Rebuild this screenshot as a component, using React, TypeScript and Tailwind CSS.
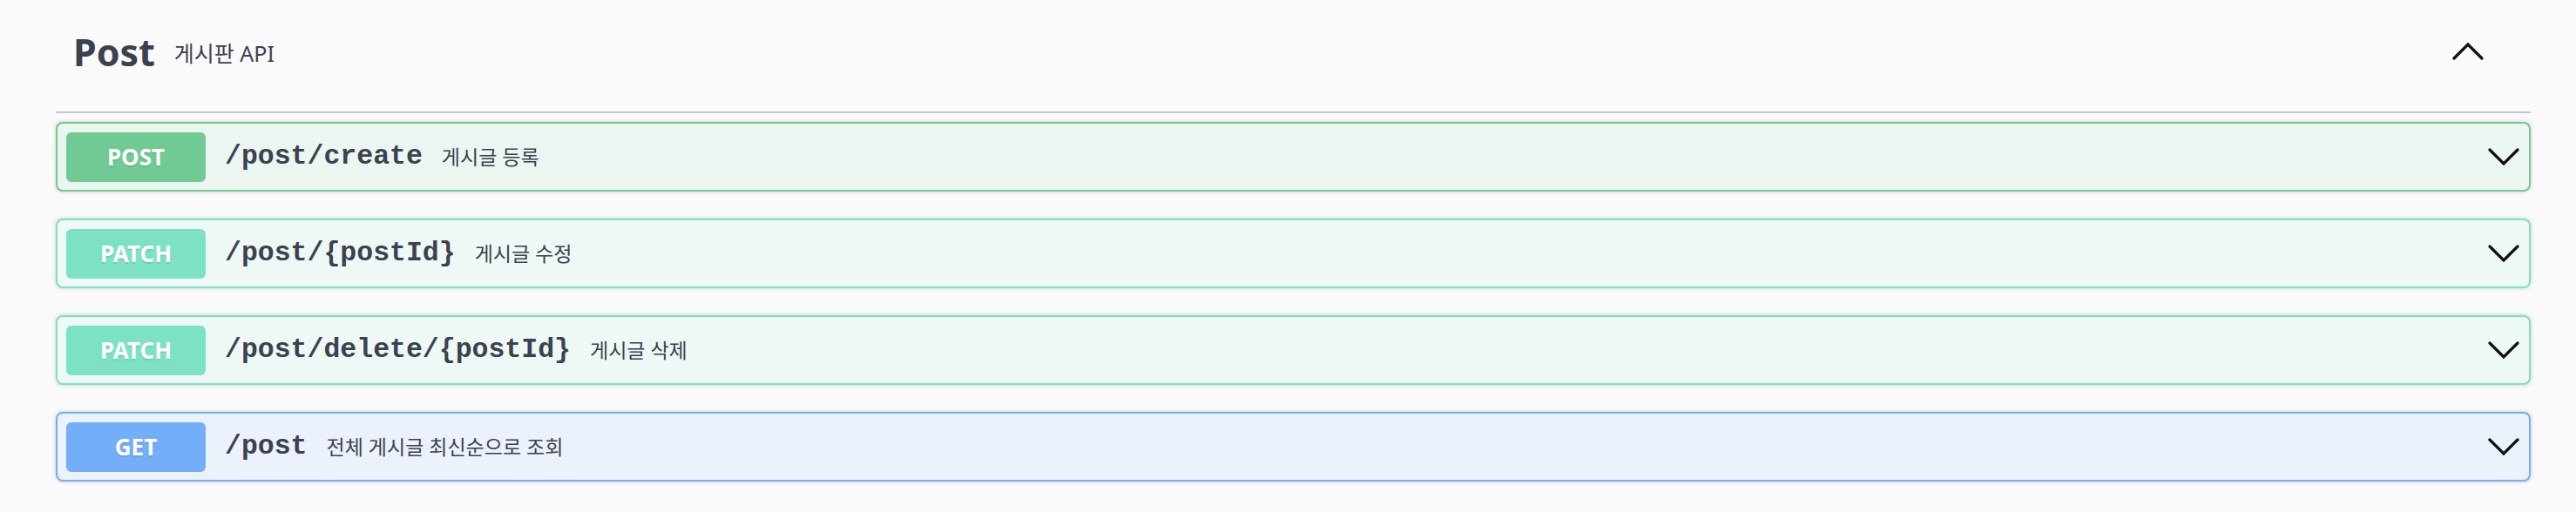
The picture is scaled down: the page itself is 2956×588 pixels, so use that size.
const ops = [
  {
    method: "POST",
    path: "/post/create",
    summary: "게시글 등록",
    card: "bg-[#ecf6f0] border-[#71c994]",
    badge: "bg-[#71c994]",
  },
  {
    method: "PATCH",
    path: "/post/{postId}",
    summary: "게시글 수정",
    card: "bg-[#eef8f4] border-[#7de2c3]",
    badge: "bg-[#7de2c3]",
  },
  {
    method: "PATCH",
    path: "/post/delete/{postId}",
    summary: "게시글 삭제",
    card: "bg-[#eef8f4] border-[#7de2c3]",
    badge: "bg-[#7de2c3]",
  },
  {
    method: "GET",
    path: "/post",
    summary: "전체 게시글 최신순으로 조회",
    card: "bg-[#ebf2fb] border-[#74adf8]",
    badge: "bg-[#74adf8]",
  },
];

const sans = "font-['Noto_Sans','Noto_Sans_CJK_KR',sans-serif]";

const Chevron = ({ up }: { up?: boolean }) => (
  <svg width="38" height="22" viewBox="0 0 38 22" className="shrink-0">
    <polyline
      points={up ? "3,19 19,3 35,19" : "3,3 19,19 35,3"}
      fill="none"
      stroke="#111"
      strokeWidth="3.3"
      strokeLinecap="round"
      strokeLinejoin="miter"
    />
  </svg>
);

const App = () => {
  return (
    <div className={`min-h-screen w-full bg-[#fafafa] pl-[64px] pr-[52px] ${sans}`}>
      {/* 태그 헤더 */}
      <div className="flex items-center justify-between h-[130px] pb-[10px] border-b-2 border-[#c4c6cc] pl-[20px] pr-[53px]">
        <div className="flex items-center">
          <span className="text-[43px] font-bold text-[#3b4151] leading-none">Post</span>
          <span className="ml-[22px] mt-[4px] text-[25px] text-[#3b4151] leading-none">
            게시판 API
          </span>
        </div>
        <Chevron up />
      </div>

      {/* 엔드포인트 목록 */}
      <div className="mt-[10px] flex flex-col gap-[31px]">
        {ops.map((op) => (
          <div
            key={op.path}
            className={`flex items-center h-[80px] border-2 rounded-[8px] px-[10px] shadow-[0_0_5px_rgba(0,0,0,0.19)] ${op.card}`}
          >
            <div
              className={`w-[160px] h-[57px] shrink-0 rounded-[6px] flex items-center justify-center text-white font-bold text-[26px] [text-shadow:0_2px_0_rgba(0,0,0,0.1)] ${op.badge}`}
            >
              {op.method}
            </div>
            <span className="ml-[22px] font-['Liberation_Mono',monospace] font-bold text-[31.5px] text-[#3b4151] leading-none">
              {op.path}
            </span>
            <span className="ml-[22px] text-[23px] text-[#3b4151] leading-none">{op.summary}</span>
            <div className="ml-auto">
              <Chevron />
            </div>
          </div>
        ))}
      </div>
    </div>
  );
};

export default App;
